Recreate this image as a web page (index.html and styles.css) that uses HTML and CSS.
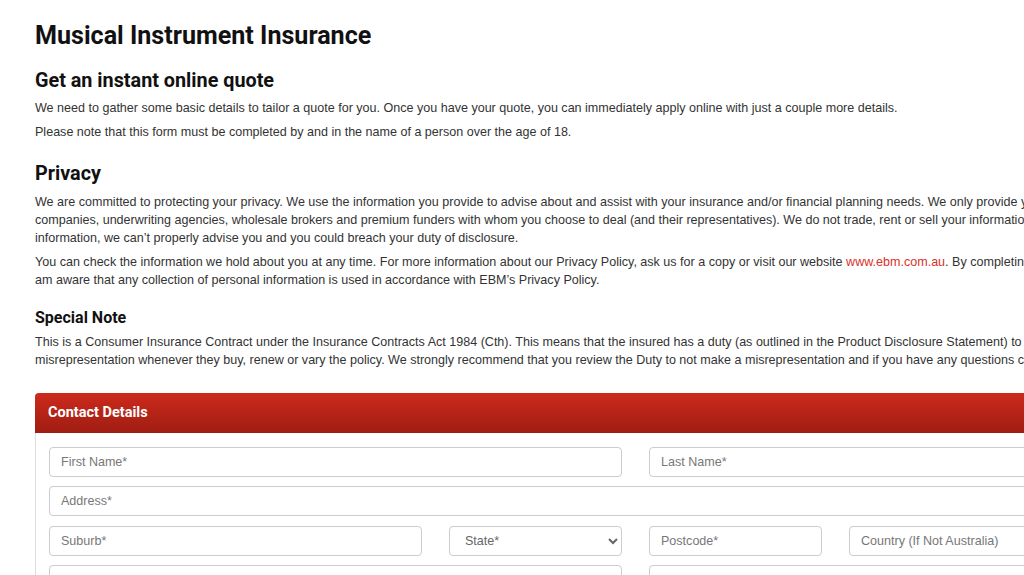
FILE: index.html
```html
<!DOCTYPE html>
<html lang="en">
<head>
    <meta charset="UTF-8">
    <meta name="viewport" content="width=device-width, initial-scale=1.0">
    <title>Musical Instrument Insurance</title>
    <link rel="stylesheet" href="styles.css">
</head>
<body>
    <div class="container">
        <h1>Musical Instrument Insurance</h1>

        <h2>Get an instant online quote</h2>
        <p>We need to gather some basic details to tailor a quote for you. Once you have your quote, you can immediately apply online with just a couple more details.</p>
        <p>Please note that this form must be completed by and in the name of a person over the age of 18.</p>

        <h2>Privacy</h2>
        <p>We are committed to protecting your privacy. We use the information you provide to advise about and assist with your insurance and/or financial planning needs. We only provide your information to insurance companies, underwriting agencies, wholesale brokers and premium funders with whom you choose to deal (and their representatives). We do not trade, rent or sell your information. If you do not give us this information, we can&rsquo;t properly advise you and you could breach your duty of disclosure.</p>
        <p>You can check the information we hold about you at any time. For more information about our Privacy Policy, ask us for a copy or visit our website <a href="#">www.ebm.com.au</a>. By completing this form, I acknowledge I am aware that any collection of personal information is used in accordance with EBM&rsquo;s Privacy Policy.</p>

        <h3>Special Note</h3>
        <p>This is a Consumer Insurance Contract under the Insurance Contracts Act 1984 (Cth). This means that the insured has a duty (as outlined in the Product Disclosure Statement) to take care not to make a misrepresentation whenever they buy, renew or vary the policy. We strongly recommend that you review the Duty to not make a misrepresentation and if you have any questions contact us.</p>

        <form class="panel">
            <div class="panel-heading">Contact Details</div>
            <div class="panel-body">
                <input class="span-3" type="text" placeholder="First Name*">
                <input class="span-3" type="text" placeholder="Last Name*">
                <input class="span-6" type="text" placeholder="Address*">
                <input class="span-2" type="text" placeholder="Suburb*">
                <select class="span-1">
                    <option>State*</option>
                    <option>NSW</option>
                    <option>VIC</option>
                    <option>QLD</option>
                </select>
                <input class="span-1" type="text" placeholder="Postcode*">
                <input class="span-2" type="text" placeholder="Country (If Not Australia)">
                <input class="span-3" type="text" placeholder="Phone*">
                <input class="span-3" type="email" placeholder="Email*">
            </div>
        </form>
    </div>
</body>
</html>
```

FILE: styles.css
```css
:root {
    --text-color: #333333;
    --heading-color: #111111;
    --border-color: #cccccc;
    --panel-border: #dddddd;
}

* {
    box-sizing: border-box;
}

body {
    margin: 0;
    font-family: "Liberation Sans", Arial, sans-serif;
    font-size: 12.55px;
    color: var(--text-color);
    background-color: #ffffff;
}

.container {
    width: 1230px;
    padding: 22px 35px 40px;
}

h1, h2, h3 {
    font-family: Roboto, "Liberation Sans", Arial, sans-serif;
    font-weight: 700;
    color: var(--heading-color);
    line-height: 1.1;
}

h1 {
    font-size: 25.1px;
    margin: 0 0 20px;
}

h2 {
    font-size: 19.8px;
    margin: 22px 0 7.5px;
}

h1 + h2 {
    margin-top: 0;
    margin-bottom: 8px;
}

h3 {
    font-size: 16px;
    margin: 20.5px 0 6px;
}

p {
    margin: 0 0 6px;
    line-height: 18px;
}

a {
    color: #d8322a;
    text-decoration: none;
}

.panel {
    margin-top: 24px;
    width: 1203px;
    border: 1px solid var(--panel-border);
    border-top: none;
    border-radius: 4px 4px 0 0;
}

.panel-heading {
    height: 40px;
    padding: 0 13px;
    display: flex;
    align-items: center;
    margin: 0 -1px;
    border-radius: 4px 4px 0 0;
    background: linear-gradient(to bottom, #cc2b1c, #a01c12);
    color: #ffffff;
    font-family: Roboto, "Liberation Sans", Arial, sans-serif;
    font-weight: 700;
    font-size: 14.5px;
}

.panel-body {
    display: grid;
    grid-template-columns: repeat(6, 173px);
    column-gap: 27px;
    row-gap: 9.5px;
    padding: 14px 13px 20px;
}

.span-1 { grid-column: span 1; }
.span-2 { grid-column: span 2; }
.span-3 { grid-column: span 3; }
.span-6 { grid-column: span 6; }

input,
select {
    height: 30px;
    width: 100%;
    padding: 0 11px;
    border: 1px solid var(--border-color);
    border-radius: 4px;
    font-family: "Liberation Sans", Arial, sans-serif;
    font-size: 12.55px;
    color: #555555;
    background-color: #ffffff;
}

input::placeholder {
    color: #777777;
}

select {
    padding: 0 8px 0 11px;
    color: #666666;
}
```
